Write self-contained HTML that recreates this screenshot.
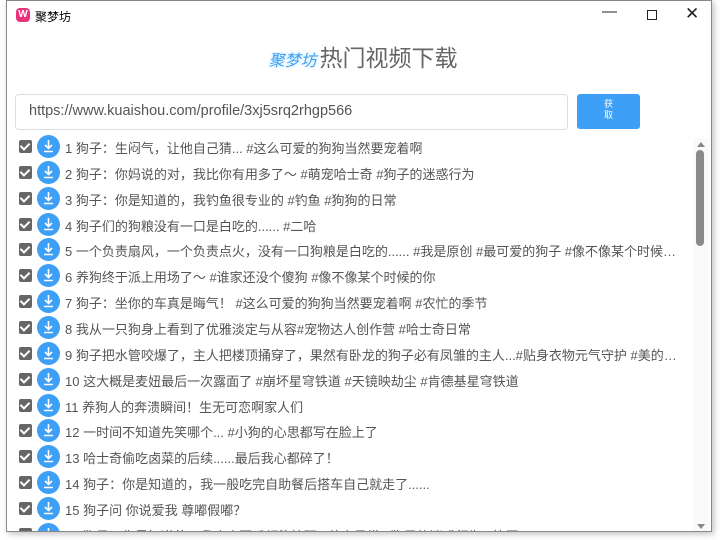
<!DOCTYPE html>
<html><head><meta charset="utf-8"><style>
*{margin:0;padding:0;box-sizing:border-box}
body{width:720px;height:540px;background:#fff;position:relative;overflow:hidden;font-family:"Liberation Sans","Noto Sans CJK SC",sans-serif}
.win{position:absolute;left:6px;top:0;width:706px;height:532px;background:#fff;border:1px solid #888;box-shadow:2px 2px 6px rgba(0,0,0,.25);overflow:hidden}
.tb{height:30px;position:relative;font-size:12px;color:#000}
.logo{position:absolute;left:9px;top:7px;width:14px;height:14px;border-radius:4px;background:#e8327a;color:#fff;font-size:10px;text-align:center;line-height:14px;font-weight:bold}
.tt{position:absolute;left:28px;top:7px}
.ctl{position:absolute;top:5px;font-size:15px;color:#222}
.title{position:absolute;top:38px;left:0;width:706px;text-align:center;font-size:23px;color:#666;padding-left:6px}
.title b{font-weight:normal;font-size:16px;color:#3aa0f5;font-style:italic;text-shadow:0 0 4px #bde0ff;margin-right:3px}
.inp{position:absolute;left:8px;top:93px;width:553px;height:36px;border:1px solid #ddd;border-radius:4px;font-size:14.5px;color:#555;padding:8px 13px}
.btn{position:absolute;left:570px;top:93px;width:63px;height:35px;background:#3e9ff7;border-radius:3px;color:#fff;font-size:9px;text-align:center;padding-top:5px;line-height:11px}
.row{position:absolute;left:0;height:24px;width:690px;white-space:nowrap;overflow:hidden}
.cb{position:absolute;left:12px;top:5px;width:13px;height:13px;background:#666;border-radius:2px}
.cb:after{content:"";position:absolute;left:3px;top:1px;width:4px;height:7px;border:solid #fff;border-width:0 2px 2px 0;transform:rotate(45deg)}
.dl{position:absolute;left:30px;top:0;width:23px;height:23px;border-radius:50%;background:#3e9ff7}
.dl svg{position:absolute;left:5px;top:4px}
.tx{position:absolute;left:58px;top:3px;font-size:13px;color:#555;width:622px;overflow:hidden;text-overflow:ellipsis}
.sb{position:absolute;left:686px;top:137px;width:16px;height:395px;background:#fafafa}
.thumb{position:absolute;left:3px;top:12px;width:8px;height:96px;background:#8a8a8a;border-radius:4px}
</style></head><body>
<div class="win">
<div class="tb"><div class="logo">W</div><div class="tt">聚梦坊</div>
<div class="ctl" style="left:595px;top:2px">—</div>
<div style="position:absolute;left:640px;top:9px;width:10px;height:10px;border:1px solid #222"></div>
<div class="ctl" style="left:678px;top:3px;font-size:17px">✕</div></div>
<div class="title"><b>聚梦坊</b>热门视频下载</div>
<div class="inp">https://www.kuaishou.com/profile/3xj5srq2rhgp566</div>
<div class="btn">获<br>取</div>
<div id="list"></div>
<div class="sb"><div style="position:absolute;left:4px;top:4px;border:4px solid transparent;border-bottom:5px solid #888;border-top:0"></div><div class="thumb"></div><div style="position:absolute;left:4px;bottom:4px;border:4px solid transparent;border-top:5px solid #888;border-bottom:0"></div></div>
</div>
<script>
var t=["1 狗子：生闷气，让他自己猜... #这么可爱的狗狗当然要宠着啊","2 狗子：你妈说的对，我比你有用多了～ #萌宠哈士奇 #狗子的迷惑行为","3 狗子：你是知道的，我钓鱼很专业的 #钓鱼 #狗狗的日常","4 狗子们的狗粮没有一口是白吃的...... #二哈","5 一个负责扇风，一个负责点火，没有一口狗粮是白吃的...... #我是原创 #最可爱的狗子 #像不像某个时候的你","6 养狗终于派上用场了～ #谁家还没个傻狗 #像不像某个时候的你","7 狗子：坐你的车真是晦气！ #这么可爱的狗狗当然要宠着啊 #农忙的季节","8 我从一只狗身上看到了优雅淡定与从容#宠物达人创作营 #哈士奇日常","9 狗子把水管咬爆了，主人把楼顶捅穿了，果然有卧龙的狗子必有凤雏的主人...#贴身衣物元气守护  #美的元气…","10 这大概是麦妞最后一次露面了 #崩坏星穹铁道 #天镜映劫尘 #肯德基星穹铁道","11 养狗人的奔溃瞬间！生无可恋啊家人们","12 一时间不知道先笑哪个... #小狗的心思都写在脸上了","13 哈士奇偷吃卤菜的后续......最后我心都碎了！","14 狗子：你是知道的，我一般吃完自助餐后搭车自己就走了......","15 狗子问 你说爱我 尊嘟假嘟？","16 狗子：你是知道的，我吃个西瓜都能搞砸 #萌宠日常 #狗子的迷惑行为 #笨蛋"];
var h="";for(var i=0;i<t.length;i++){h+='<div class="row" style="top:'+(134+i*25.85)+'px"><div class="cb"></div><div class="dl"><svg width="13" height="14" viewBox="0 0 13 14"><path d="M6.5 1v8M3 6l3.5 3.5L10 6M2 12.5h9" stroke="#fff" stroke-width="1.6" fill="none"/></svg></div><div class="tx">'+t[i]+'</div></div>'}
document.getElementById("list").innerHTML=h;
</script>
</body></html>
